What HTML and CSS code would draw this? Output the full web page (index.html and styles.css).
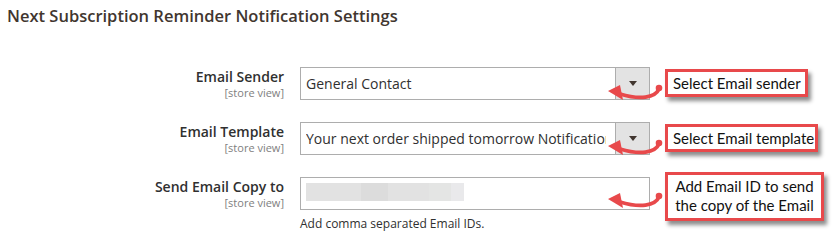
FILE: index.html
```html
<!DOCTYPE html>
<html>
<head>
<meta charset="utf-8">
<link rel="stylesheet" href="styles.css">
</head>
<body>
<div class="page">
  <h1 class="title">Next Subscription Reminder Notification Settings</h1>
  <div class="rows">
    <div class="row">
      <div class="label"><span class="label-text">Email Sender</span><span class="scope">[store view]</span></div>
      <div class="control">
        <div class="select"><span class="select-value">General Contact</span><span class="select-btn"><span class="tri"></span></span></div>
      </div>
      <div class="callout callout-1">Select Email sender</div>
      <svg class="arrow" width="70" height="40" viewBox="0 0 70 40"><path d="M59 22 C55 31 40 33 20 27" fill="none" stroke="#e8494b" stroke-width="3.8" stroke-linecap="round"/><polygon points="8,24 20,18 23,33" fill="#e8494b"/><circle cx="59" cy="21" r="3.3" fill="#e8494b"/></svg>
    </div>
    <div class="row">
      <div class="label"><span class="label-text">Email Template</span><span class="scope">[store view]</span></div>
      <div class="control">
        <div class="select"><span class="select-value">Your next order shipped tomorrow Notification</span><span class="select-btn"><span class="tri"></span></span></div>
      </div>
      <div class="callout callout-2">Select Email template</div>
      <svg class="arrow" width="70" height="40" viewBox="0 0 70 40"><path d="M59 22 C55 31 40 33 20 27" fill="none" stroke="#e8494b" stroke-width="3.8" stroke-linecap="round"/><polygon points="8,24 20,18 23,33" fill="#e8494b"/><circle cx="59" cy="21" r="3.3" fill="#e8494b"/></svg>
    </div>
    <div class="row">
      <div class="label"><span class="label-text">Send Email Copy to</span><span class="scope">[store view]</span></div>
      <div class="control">
        <div class="input"><span class="blur"></span></div>
        <div class="note">Add comma separated Email IDs.</div>
      </div>
      <div class="callout callout-3">Add Email ID to send<br>the copy of the Email</div>
      <svg class="arrow" width="70" height="40" viewBox="0 0 70 40"><path d="M59 20 C55 29 40 31 20 25" fill="none" stroke="#e8494b" stroke-width="3.8" stroke-linecap="round"/><polygon points="8,22 20,16 23,31" fill="#e8494b"/><circle cx="59" cy="19" r="3.3" fill="#e8494b"/></svg>
    </div>
  </div>
</div>
</body>
</html>
```

FILE: styles.css
```css
html, body {
  margin: 0;
  padding: 0;
  background: #ffffff;
}
.page {
  width: 836px;
  height: 240px;
  font-family: "Open Sans", "DejaVu Sans", sans-serif;
  color: #303030;
  overflow: hidden;
}
.title {
  margin: 0;
  padding: 5px 0 0 7px;
  font-size: 16.5px;
  font-weight: 600;
  line-height: 22px;
  color: #41362f;
}
.rows {
  display: flex;
  flex-direction: column;
  gap: 22px;
  margin-top: 40px;
}
.row {
  position: relative;
  display: grid;
  grid-template-columns: 284px 351px 172px;
  column-gap: 15px;
  align-items: start;
}
.label {
  display: flex;
  flex-direction: column;
  align-items: flex-end;
  text-align: right;
}
.label-text {
  font-size: 14px;
  font-weight: 600;
  line-height: 19px;
  color: #303030;
}
.scope {
  font-size: 11px;
  line-height: 13px;
  color: #808080;
}
.control {
  display: flex;
  flex-direction: column;
  margin-left: 1px;
}
.select {
  display: flex;
  height: 33px;
  box-sizing: border-box;
  border: 1px solid #adadad;
  background: #fff;
}
.select-value {
  flex: 1;
  overflow: hidden;
  white-space: nowrap;
  margin-left: 5px;
  margin-right: 9px;
  font-size: 14px;
  line-height: 31px;
  color: #303030;
}
.select-btn {
  width: 33px;
  flex: none;
  background: #e3e3e3;
  border-left: 1px solid #adadad;
  display: flex;
  align-items: center;
  justify-content: center;
}
.tri {
  width: 0;
  height: 0;
  border-left: 4px solid transparent;
  border-right: 4px solid transparent;
  border-top: 5px solid #41362f;
}
.input {
  height: 33px;
  box-sizing: border-box;
  border: 1px solid #adadad;
  background: #fff;
  padding: 5px 0 0 5px;
}
.blur {
  display: block;
  width: 158px;
  height: 18px;
  background: linear-gradient(90deg, #e2e2e2 0 35%, #dcdcdc 35% 52%, #e2e2e2 52% 78%, #e4e5e4 78% 92%, #e9e9eb 92% 100%);
}
.note {
  margin-top: 6px;
  font-size: 12px;
  line-height: 16px;
  color: #303030;
}
.callout {
  box-sizing: border-box;
  border: 3px solid #e8494b;
  background: #fff;
  box-shadow: 3px 4px 4px rgba(0, 0, 0, 0.45);
  font-family: Lato, "Liberation Sans", sans-serif;
  font-size: 15px;
  color: #111;
  padding: 0 5px;
  white-space: nowrap;
}
.callout-1 {
  width: 143px;
  height: 28px;
  line-height: 22px;
  margin-top: 2px;
}
.callout-2 {
  width: 153px;
  height: 28px;
  line-height: 22px;
  margin-top: 2px;
}
.callout-3 {
  width: 159px;
  height: 49px;
  line-height: 19px;
  padding-top: 2px;
  text-align: center;
  margin-top: -5px;
}
.arrow {
  position: absolute;
  left: 600px;
  top: 0;
}
```
